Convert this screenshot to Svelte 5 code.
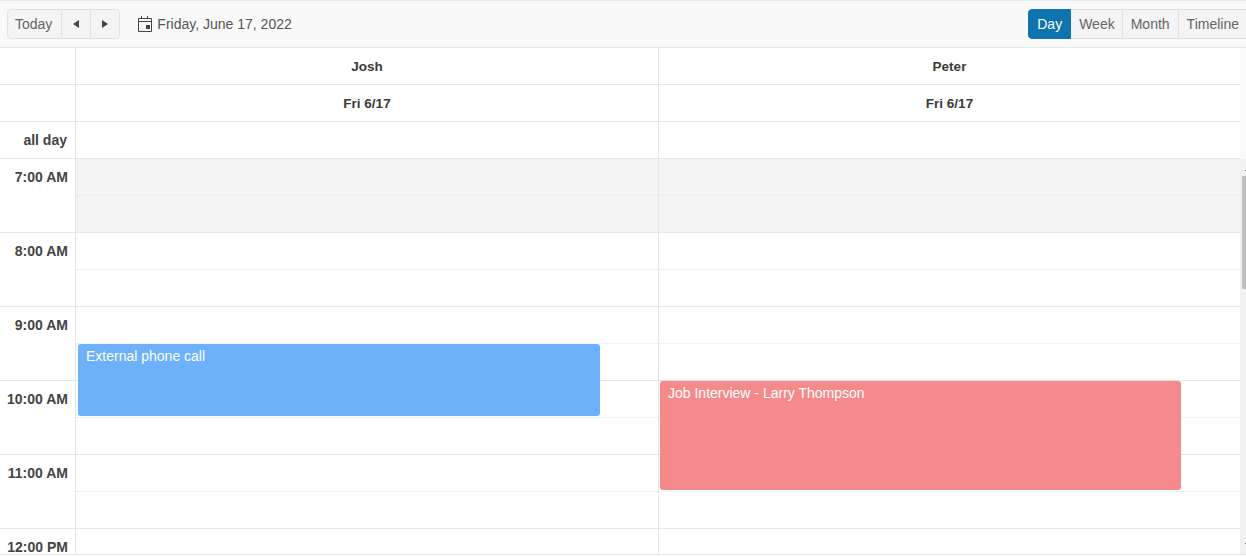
<script>
  const views = ['Day', 'Week', 'Month', 'Timeline'];
  const people = ['Josh', 'Peter'];
  const hours = ['7:00 AM', '8:00 AM', '9:00 AM', '10:00 AM', '11:00 AM', '12:00 PM'];
  const rowH = 37;
  // minutes from 7:00, one row is half an hour
  const events = [
    { col: 0, title: 'External phone call', start: 150, end: 210, color: '#6cb1fa', left: 2, right: 58 },
    { col: 1, title: 'Job Interview - Larry Thompson', start: 180, end: 270, color: '#f58a8a', left: 1, right: 59 }
  ];
  const top = (m) => (m / 30) * rowH;
</script>

<div class="scheduler">
  <div class="toolbar">
    <div class="group">
      <button class="btn today">Today</button>
      <button class="btn nav" aria-label="Previous"><span class="tri left"></span></button>
      <button class="btn nav" aria-label="Next"><span class="tri right"></span></button>
    </div>
    <div class="date">
      <svg width="14" height="16" viewBox="0 0 14 16" aria-hidden="true">
        <path d="M.5 2.5h13v13h-13zM.5 5.5h13" fill="none" stroke="#444" stroke-width="1" />
        <path d="M3 0h1v3H3zM9 0h1v3H9zM8 9h4v4H8z" fill="#444" />
      </svg>
      <span>Friday, June 17, 2022</span>
    </div>
    <div class="group views">
      {#each views as v, i}
        <button class="btn" class:active={i === 0}>{v}</button>
      {/each}
    </div>
  </div>

  <div class="main">
    <div class="grid">
      <div class="row head">
        <div class="gutter"></div>
        {#each people as p}<div class="cell">{p}</div>{/each}
      </div>
      <div class="row head">
        <div class="gutter"></div>
        {#each people as p}<div class="cell">Fri 6/17</div>{/each}
      </div>
      <div class="row head allday">
        <div class="gutter label">all day</div>
        {#each people as p}<div class="cell"></div>{/each}
      </div>

      <div class="times">
        <div class="gutter-col">
          {#each hours as h}
            <div class="hour label">{h}</div>
          {/each}
        </div>
        {#each people as p, c}
          <div class="col">
            {#each hours as h, i}
              <div class="half first" class:off={i === 0}></div>
              <div class="half" class:off={i === 0}></div>
            {/each}
            {#each events.filter((e) => e.col === c) as e}
              <div
                class="event"
                style="top: {top(e.start)}px; height: {top(e.end) - top(e.start) - 2}px; background: {e.color}; left: {e.left}px; right: {e.right}px"
              >
                {e.title}
              </div>
            {/each}
          </div>
        {/each}
      </div>
    </div>

    <div class="scrollbar">
      <div class="track">
        <span class="thumb"></span>
        <span class="dot up"></span>
        <span class="dot down"></span>
      </div>
    </div>
  </div>
</div>

<style>
  :global(body) {
    background: #fff;
  }
  .scheduler {
    height: 555px;
    overflow: hidden;
    border-bottom: 1px solid #e6e6e6;
    box-sizing: border-box;
    font-family: 'Liberation Sans', Arial, sans-serif;
    font-size: 14px;
    color: #333;
    display: flex;
    flex-direction: column;
  }
  .toolbar {
    height: 48px;
    box-sizing: border-box;
    flex: none;
    display: flex;
    align-items: center;
    padding: 0 0 0 7px;
    background: #f9f9f9;
    border-top: 1px solid #ececec;
    border-bottom: 1px solid #e6e6e6;
  }
  .group {
    display: flex;
    height: 30px;
  }
  .views {
    margin-left: auto;
    margin-right: -2px;
  }
  .views .btn:nth-child(2) {
    padding-right: 7px;
  }
  .btn {
    height: 30px;
    box-sizing: border-box;
    font: inherit;
    color: #666;
    padding: 0 8px;
    background: #f4f4f4;
    border: 1px solid #e1e1e1;
    border-left-width: 0;
    display: flex;
    align-items: center;
    justify-content: center;
  }
  .btn:first-child {
    border-left-width: 1px;
    border-radius: 4px 0 0 4px;
  }
  .group:not(.views) .btn:last-child {
    border-radius: 0 4px 4px 0;
  }
  .btn.today {
    padding: 0 9px 0 7px;
  }
  .btn.active {
    background: #0f74ae;
    border-color: #0f74ae;
    color: #fff;
  }
  .nav {
    width: 29px;
    padding: 0;
  }
  .tri {
    width: 0;
    height: 0;
    border-top: 4px solid transparent;
    border-bottom: 4px solid transparent;
  }
  .tri.left {
    border-right: 6px solid #444;
  }
  .tri.right {
    border-left: 6px solid #444;
  }
  .date {
    margin-left: 18px;
    display: flex;
    align-items: center;
    gap: 5px;
    color: #555;
  }
  .main {
    flex: 1;
    min-height: 0;
    display: flex;
  }
  .grid {
    flex: none;
    width: 1240px;
  }
  .row,
  .times {
    display: grid;
    grid-template-columns: 76px 583px 581px;
  }
  .row {
    height: 37px;
    box-sizing: border-box;
    border-bottom: 1px solid #e6e6e6;
  }
  .gutter {
    border-right: 1px solid #e6e6e6;
  }
  .cell {
    border-right: 1px solid #e6e6e6;
    font-weight: 700;
    font-size: 13.5px;
    display: flex;
    align-items: center;
    justify-content: center;
    color: #3a3a3a;
  }
  .cell:last-child {
    border-right: 0;
  }
  .label {
    font-weight: 700;
    text-align: right;
    padding: 10px 7px 0 0;
    box-sizing: border-box;
    color: #444;
  }
  .gutter.label {
    padding-right: 8px;
  }
  .gutter-col {
    border-right: 1px solid #e6e6e6;
  }
  .hour {
    height: 74px;
    border-bottom: 1px solid #e6e6e6;
  }
  .col {
    position: relative;
    border-right: 1px solid #e6e6e6;
  }
  .col:last-child {
    border-right: 0;
  }
  .half {
    height: 37px;
    box-sizing: border-box;
    border-bottom: 1px solid #e6e6e6;
  }
  .half.first {
    border-bottom: 1px dotted #e6e6e6;
  }
  .off {
    background: #f4f4f4;
  }
  .event {
    position: absolute;
    box-sizing: border-box;
    padding: 4px 8px;
    border-radius: 3px;
    color: #fff;
    line-height: 16px;
  }
  .scrollbar {
    flex: none;
    width: 6px;
    display: flex;
    flex-direction: column;
    padding-top: 111px;
    background: #fafafa;
  }
  .track {
    flex: 1;
    position: relative;
    background: #f1f1f1;
  }
  .thumb {
    position: absolute;
    left: 2px;
    right: 0;
    top: 17px;
    height: 113px;
    background: #c1c1c1;
  }
  .dot {
    position: absolute;
    right: 0;
    width: 1px;
    height: 1px;
    background: #666;
  }
  .dot.up {
    top: 11px;
  }
  .dot.down {
    bottom: 10px;
  }
</style>
